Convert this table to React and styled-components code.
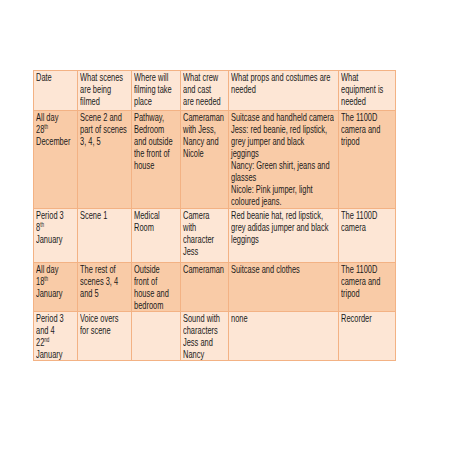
import React from 'react'
import styled, { createGlobalStyle } from 'styled-components'

const Global = createGlobalStyle`
  html, body {
    margin: 0;
    padding: 0;
    background: #ffffff;
  }
`

const Page = styled.div`
  width: 453px;
  height: 453px;
  padding: 70px 0 0 33px;
  box-sizing: border-box;
`

const Table = styled.table`
  border-collapse: collapse;
  table-layout: fixed;
  width: 362px;
  font-family: "Liberation Sans", Arial, sans-serif;
  font-size: 10.5px;
  line-height: 12px;
  color: #1a1a1a;
`

const Row = styled.tr`
  height: ${(p) => p.$h}px;
  background: ${(p) => (p.$dark ? '#f9cba7' : '#fde6d5')};
`

const Cell = styled.td`
  border: 1px solid #f3b284;
  padding: 0 2px 0 2px;
  vertical-align: top;
  white-space: nowrap;
  overflow: hidden;
`

// the source font is a condensed face, so squeeze the text horizontally
const Text = styled.div`
  display: inline-block;
  transform: scaleX(0.71);
  transform-origin: left top;
`

const Sup = styled.sup`
  font-size: 6.5px;
  line-height: 0;
  vertical-align: super;
`

const widths = [44, 54, 49, 48, 110, 57]

const lines = (arr) =>
  arr.map((l, i) => (
    <React.Fragment key={i}>
      {l}
      {i < arr.length - 1 && <br />}
    </React.Fragment>
  ))

const rows = [
  {
    h: 40,
    dark: false,
    cells: [
      ['Date'],
      ['What scenes', 'are being', 'filmed'],
      ['Where will', 'filming take', 'place'],
      ['What crew', 'and cast', 'are needed'],
      ['What props and costumes are', 'needed'],
      ['What', 'equipment is', 'needed'],
    ],
  },
  {
    h: 98,
    dark: true,
    cells: [
      ['All day', <>28<Sup>th</Sup></>, 'December'],
      ['Scene 2 and', 'part of scenes', '3, 4, 5'],
      ['Pathway,', 'Bedroom', 'and outside', 'the front of', 'house'],
      ['Cameraman', 'with Jess,', 'Nancy and', 'Nicole'],
      [
        'Suitcase and handheld camera',
        'Jess: red beanie, red lipstick,',
        'grey jumper and black',
        'jeggings',
        'Nancy: Green shirt, jeans and',
        'glasses',
        'Nicole: Pink jumper, light',
        'coloured jeans.',
      ],
      ['The 1100D', 'camera and', 'tripod'],
    ],
  },
  {
    h: 54,
    dark: false,
    cells: [
      ['Period 3', <>8<Sup>th</Sup></>, 'January'],
      ['Scene 1'],
      ['Medical', 'Room'],
      ['Camera', 'with', 'character', 'Jess'],
      ['Red beanie hat, red lipstick,', 'grey adidas jumper and black', 'leggings'],
      ['The 1100D', 'camera'],
    ],
  },
  {
    h: 48,
    dark: true,
    cells: [
      ['All day', <>18<Sup>th</Sup></>, 'January'],
      ['The rest of', 'scenes 3, 4', 'and 5'],
      ['Outside', 'front of', 'house and', 'bedroom'],
      ['Cameraman'],
      ['Suitcase and clothes'],
      ['The 1100D', 'camera and', 'tripod'],
    ],
  },
  {
    h: 49,
    dark: false,
    cells: [
      ['Period 3', 'and 4', <>22<Sup>nd</Sup></>, 'January'],
      ['Voice overs', 'for scene'],
      [],
      ['Sound with', 'characters', 'Jess and', 'Nancy'],
      ['none'],
      ['Recorder'],
    ],
  },
]

export default function App() {
  return (
    <Page>
      <Global />
      <Table>
        <colgroup>
          {widths.map((w, i) => (
            <col key={i} style={{ width: w }} />
          ))}
        </colgroup>
        <tbody>
          {rows.map((r, i) => (
            <Row key={i} $h={r.h} $dark={r.dark}>
              {r.cells.map((c, j) => (
                <Cell key={j}>
                  <Text>{lines(c)}</Text>
                </Cell>
              ))}
            </Row>
          ))}
        </tbody>
      </Table>
    </Page>
  )
}
